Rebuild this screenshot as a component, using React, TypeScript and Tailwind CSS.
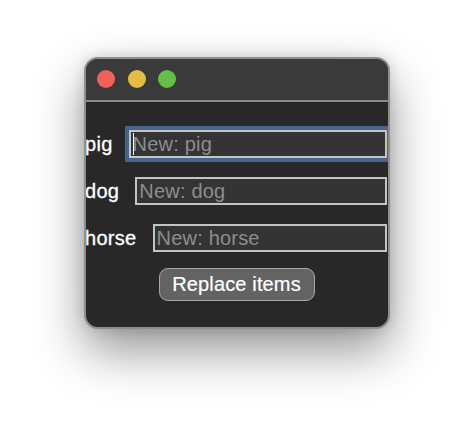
import React from "react";

const font = { fontFamily: '"Liberation Sans", Arial, sans-serif' };

const rows = [
  { name: "pig", focused: true },
  { name: "dog", focused: false },
  { name: "horse", focused: false },
];

export default function App() {
  return (
    <div className="h-[440px] w-[474px] overflow-hidden bg-white pl-[84px] pt-[57px]" style={font}>
      <div className="h-[272px] w-[306px] overflow-hidden rounded-[14px] border-2 border-[#8e8e8e] bg-[#282828] shadow-[0_22px_50px_rgba(0,0,0,0.42),0_0_14px_rgba(0,0,0,0.14)]">
        <div className="flex h-[43px] items-center gap-[12.5px] border-b-2 border-[#8a8a8a] bg-[#3a3a3a] pb-[2px] pl-[11px]">
          <div className="h-[18px] w-[18px] rounded-full bg-[#f0625a]" />
          <div className="h-[18px] w-[18px] rounded-full bg-[#e6bc44]" />
          <div className="h-[18px] w-[18px] rounded-full bg-[#62c046]" />
        </div>

        <div className="flex flex-col gap-[19px] pr-[1px] pt-[28px]">
          {rows.map((row) => (
            <div key={row.name} className="flex h-[28px] items-center">
              <span className="-ml-[1px] text-[20px] leading-none tracking-[0.3px] text-white [-webkit-text-stroke:0.3px_white]">
                {row.name}
              </span>
              <div
                className={`relative ml-[16px] h-[28px] min-w-0 flex-1 border-2 border-[#c4c4c4] bg-[#343434] ${
                  row.focused ? "outline-[4px] outline-offset-[0px] outline-[#45658f]" : ""
                }`}
              >
                <input
                  readOnly
                  placeholder={`New: ${row.name}`}
                  className="h-full w-full bg-transparent pl-[2px] text-[20px] leading-none tracking-[0.2px] text-white outline-none placeholder:text-[#8d8d8d]"
                />
                {row.focused && <div className="absolute left-[2px] top-[1px] h-[22px] w-[1px] bg-white" />}
              </div>
            </div>
          ))}

          <div className="-mt-[3px] flex justify-center">
            <button className="h-[33px] w-[156px] rounded-[9px] border border-[#a8a8a8] bg-[#636363] pb-[2px] text-[20px] leading-none tracking-[0.15px] text-white [-webkit-text-stroke:0.2px_white]">
              Replace items
            </button>
          </div>
        </div>
      </div>
    </div>
  );
}
